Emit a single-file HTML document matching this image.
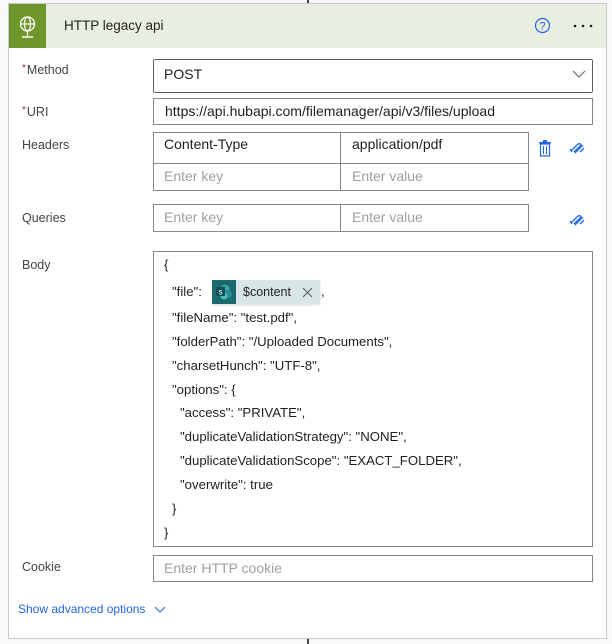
<!DOCTYPE html>
<html><head><style>
*{box-sizing:border-box;margin:0;padding:0}
body{width:612px;height:644px;background:#f8f8f8;font-family:"Liberation Sans",sans-serif;font-size:13px;color:#323130;position:relative;overflow:hidden}
.card{position:absolute;left:8px;top:3px;width:599px;height:636px;background:#fff;border:1px solid #c8c8c8}
.hdr{position:absolute;left:0;top:0;width:597px;height:44px;background:#e9efe0}
.ico{position:absolute;left:0;top:0;width:37px;height:44px;background:#6f962b}
.title{position:absolute;left:55px;top:14px;font-size:13.5px;color:#201f1e}
.lbl{position:absolute;left:13px;font-size:12.5px;color:#444}
.req{color:#a4262c;font-size:10px;vertical-align:top;margin-right:1px}
.box{position:absolute;border:1px solid #8a8886;background:#fff}
.t{position:absolute;font-size:14px;color:#201f1e}
.ph{color:#a19f9d}
.line{position:absolute;font-size:13.2px;color:#201f1e;white-space:pre}
</style></head><body>
<div style="position:absolute;left:307px;top:0;width:2px;height:3px;background:#444"></div>
<div style="position:absolute;left:307px;top:638px;width:2px;height:6px;background:#444"></div>
<div class="card">
 <div class="hdr">
  <div class="ico"><svg width="37" height="44" viewBox="0 0 37 44"><circle cx="18.5" cy="20" r="7" fill="none" stroke="#fff" stroke-width="1.3"/><ellipse cx="18.5" cy="20" rx="3" ry="7" fill="none" stroke="#fff" stroke-width="1.2"/><line x1="11.5" y1="20" x2="25.5" y2="20" stroke="#fff" stroke-width="1.2"/><line x1="18.5" y1="27" x2="18.5" y2="32" stroke="#fff" stroke-width="1.2"/><line x1="13" y1="33" x2="24" y2="33" stroke="#fff" stroke-width="1.5"/></svg></div>
  <div class="title">HTTP legacy api</div>
  <svg style="position:absolute;left:525px;top:13px" width="17" height="17"><circle cx="8.5" cy="8.5" r="7" fill="none" stroke="#2266e3" stroke-width="1.2"/><text x="8.5" y="12.5" text-anchor="middle" font-size="11" fill="#2266e3" font-family="Liberation Sans">?</text></svg>
  <svg style="position:absolute;left:564px;top:20px" width="22" height="4"><circle cx="2" cy="2" r="1.3" fill="#201f1e"/><circle cx="10" cy="2" r="1.3" fill="#201f1e"/><circle cx="18" cy="2" r="1.3" fill="#201f1e"/></svg>
 </div>
 <div class="lbl" style="top:59px"><span class="req">*</span>Method</div>
 <div class="box" style="left:144px;top:55px;width:440px;height:34px;border-color:#605e5c;border-radius:2px"></div>
 <div class="t" style="left:155px;top:62px">POST</div>
 <svg style="position:absolute;left:563px;top:65px" width="14" height="10"><polyline points="1,2 7,8 13,2" fill="none" stroke="#605e5c" stroke-width="1"/></svg>
 <div class="lbl" style="top:101px"><span class="req">*</span>URI</div>
 <div class="box" style="left:144px;top:94px;width:440px;height:27px"></div>
 <div class="t" style="left:156px;top:99px">https://api.hubapi.com/filemanager/api/v3/files/upload</div>
 <div class="lbl" style="top:134px">Headers</div>
 <div class="box" style="left:144px;top:128px;width:376px;height:59px"></div>
 <div style="position:absolute;left:331px;top:128px;width:1px;height:59px;background:#8a8886"></div>
 <div style="position:absolute;left:144px;top:159px;width:376px;height:1px;background:#8a8886"></div>
 <div class="t" style="left:155px;top:132px">Content-Type</div>
 <div class="t" style="left:343px;top:132px">application/pdf</div>
 <div class="t ph" style="left:155px;top:164px">Enter key</div>
 <div class="t ph" style="left:343px;top:164px">Enter value</div>
 <svg style="position:absolute;left:529px;top:136px" width="14" height="17"><rect x="1" y="2" width="12" height="1.5" fill="#2266e3"/><rect x="5" y="0" width="4" height="2" fill="#2266e3"/><rect x="2.5" y="4" width="9" height="12" fill="none" stroke="#2266e3" stroke-width="1.2"/><line x1="5.5" y1="6" x2="5.5" y2="14" stroke="#2266e3"/><line x1="8.5" y1="6" x2="8.5" y2="14" stroke="#2266e3"/></svg>
 <svg style="position:absolute;left:560px;top:139px" width="16" height="11"><path d="M2 8 L9 1 Q11 0 12 2 L5 9 M1 6 L3 9 M6 10 L14 2 M11 9 L15 5" fill="none" stroke="#2266e3" stroke-width="1.3"/></svg>
 <div class="lbl" style="top:207px">Queries</div>
 <div class="box" style="left:144px;top:200px;width:376px;height:28px"></div>
 <div style="position:absolute;left:331px;top:200px;width:1px;height:28px;background:#8a8886"></div>
 <div class="t ph" style="left:155px;top:205px">Enter key</div>
 <div class="t ph" style="left:343px;top:205px">Enter value</div>
 <svg style="position:absolute;left:560px;top:211px" width="16" height="11"><path d="M2 8 L9 1 Q11 0 12 2 L5 9 M1 6 L3 9 M6 10 L14 2 M11 9 L15 5" fill="none" stroke="#2266e3" stroke-width="1.3"/></svg>
 <div class="lbl" style="top:254px">Body</div>
 <div class="box" style="left:144px;top:247px;width:440px;height:296px"></div>
 <div class="line" style="left:155px;top:253px">{</div>
 <div class="line" style="left:163px;top:280px">"file":</div>
 <div style="position:absolute;left:203px;top:276px;width:108px;height:24px;background:#d9e6e8;box-shadow:0 1px 2px rgba(0,0,0,.15)">
  <div style="position:absolute;left:0;top:0;width:24px;height:24px;background:#1a6a6e"></div>
  <svg style="position:absolute;left:3px;top:4px" width="18" height="16"><circle cx="10" cy="5" r="4.5" fill="#36a3a7"/><circle cx="13" cy="10" r="4" fill="#2a8c90"/><circle cx="9" cy="12" r="3.5" fill="#4fb9bd"/><rect x="1" y="3" width="9" height="9" fill="#0d5257"/><text x="5.5" y="10.5" text-anchor="middle" font-size="8" fill="#fff" font-family="Liberation Sans">s</text></svg>
  <div style="position:absolute;left:31px;top:5px;font-size:12.5px;color:#201f1e">$content</div>
  <svg style="position:absolute;left:90px;top:7px" width="11" height="11"><path d="M1 1 L10 10 M10 1 L1 10" stroke="#605e5c" stroke-width="1.1"/></svg>
 </div>
 <div class="line" style="left:312px;top:280px">,</div>
 <div class="line" style="left:163px;top:306px">"fileName": "test.pdf",</div>
 <div class="line" style="left:163px;top:330px">"folderPath": "/Uploaded Documents",</div>
 <div class="line" style="left:163px;top:354px">"charsetHunch": "UTF-8",</div>
 <div class="line" style="left:163px;top:378px">"options": {</div>
 <div class="line" style="left:171px;top:401px">"access": "PRIVATE",</div>
 <div class="line" style="left:171px;top:425px">"duplicateValidationStrategy": "NONE",</div>
 <div class="line" style="left:171px;top:449px">"duplicateValidationScope": "EXACT_FOLDER",</div>
 <div class="line" style="left:171px;top:473px">"overwrite": true</div>
 <div class="line" style="left:163px;top:497px">}</div>
 <div class="line" style="left:155px;top:521px">}</div>
 <div class="lbl" style="top:556px">Cookie</div>
 <div class="box" style="left:144px;top:551px;width:440px;height:27px"></div>
 <div class="t ph" style="left:155px;top:556px">Enter HTTP cookie</div>
 <div style="position:absolute;left:9px;top:598px;font-size:12px;color:#2266e3">Show advanced options</div>
 <svg style="position:absolute;left:145px;top:602px" width="12" height="8"><polyline points="1,1 6,6 11,1" fill="none" stroke="#2266e3" stroke-width="1"/></svg>
</div>
</body></html>
